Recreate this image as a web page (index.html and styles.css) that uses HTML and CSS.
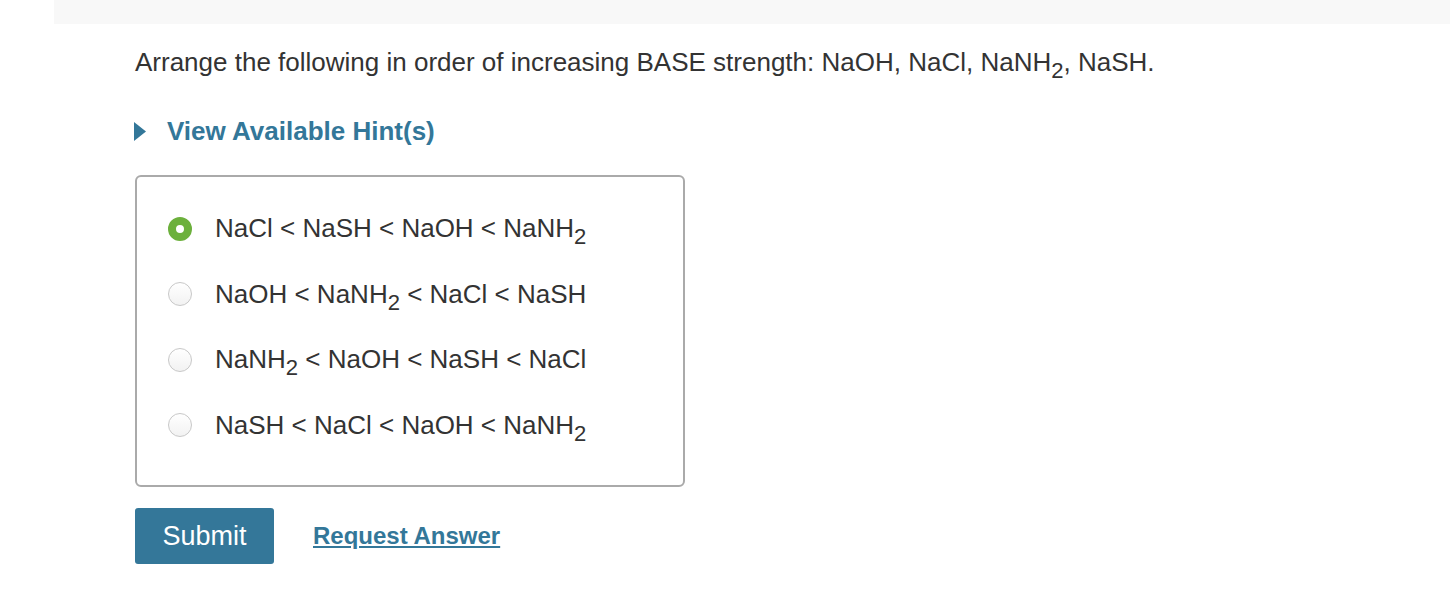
FILE: index.html
```html
<!DOCTYPE html>
<html>
<head>
<meta charset="utf-8">
<link rel="stylesheet" href="styles.css">
</head>
<body>
<div class="topbar"></div>
<main class="content">
  <p class="question">Arrange the following in order of increasing BASE strength: NaOH, NaCl, NaNH<sub>2</sub>, NaSH.</p>
  <div class="hint">
    <svg class="tri" width="12" height="19" viewBox="0 0 12 19"><path d="M0 0 L12 9.5 L0 19 Z" fill="#337799"/></svg>
    <span class="hint-text">View Available Hint(s)</span>
  </div>
  <div class="choices">
    <label class="choice"><span class="radio checked"></span><span class="opt">NaCl &lt; NaSH &lt; NaOH &lt; NaNH<sub>2</sub></span></label>
    <label class="choice"><span class="radio"></span><span class="opt">NaOH &lt; NaNH<sub>2</sub> &lt; NaCl &lt; NaSH</span></label>
    <label class="choice"><span class="radio"></span><span class="opt">NaNH<sub>2</sub> &lt; NaOH &lt; NaSH &lt; NaCl</span></label>
    <label class="choice"><span class="radio"></span><span class="opt">NaSH &lt; NaCl &lt; NaOH &lt; NaNH<sub>2</sub></span></label>
  </div>
  <div class="actions">
    <button class="submit">Submit</button>
    <a class="request" href="#">Request Answer</a>
  </div>
</main>
</body>
</html>
```
FILE: styles.css
```css
html, body {
  margin: 0;
  padding: 0;
  background: #fff;
  font-family: "Liberation Sans", Arial, sans-serif;
  color: #333;
}
.topbar {
  margin-left: 54px;
  height: 24px;
  background: #f8f8f8;
}
.content {
  padding-left: 135px;
}
.question {
  margin: 0;
  padding-top: 23px;
  font-size: 26px;
  line-height: 30px;
}
sub {
  font-size: 0.85em;
  line-height: 0;
  vertical-align: -0.3em;
}
.hint {
  display: flex;
  align-items: center;
  margin-top: 39px;
  height: 30px;
}
.tri { margin-left: -1px; margin-right: 21px; }
.hint-text {
  font-weight: bold;
  font-size: 26px;
  color: #337799;
}
.choices {
  margin-top: 29px;
  width: 550px;
  height: 312px;
  border: 2px solid #aaa;
  border-radius: 6px;
  padding-top: 19px;
  box-sizing: border-box;
}
.choice {
  display: flex;
  align-items: center;
  height: 65.5px;
  padding-left: 31px;
}
.radio {
  width: 24px;
  height: 24px;
  border-radius: 50%;
  border: 1px solid #c8c8c8;
  background: linear-gradient(#fff, #f2f2f2);
  box-sizing: border-box;
  margin-right: 23px;
  flex: none;
}
.radio.checked {
  border: 8px solid #6cb03c;
  background: #fff;
}
.opt {
  font-size: 26px;
  color: #333;
}
.actions {
  display: flex;
  align-items: center;
  margin-top: 21px;
}
.submit {
  width: 139px;
  height: 56px;
  background: #347799;
  color: #fff;
  border: none;
  border-radius: 3px;
  font-family: "Liberation Sans", Arial, sans-serif;
  font-size: 27px;
}
.request {
  margin-left: 39px;
  font-weight: bold;
  font-size: 24px;
  color: #337799;
  text-decoration: underline;
}
```
